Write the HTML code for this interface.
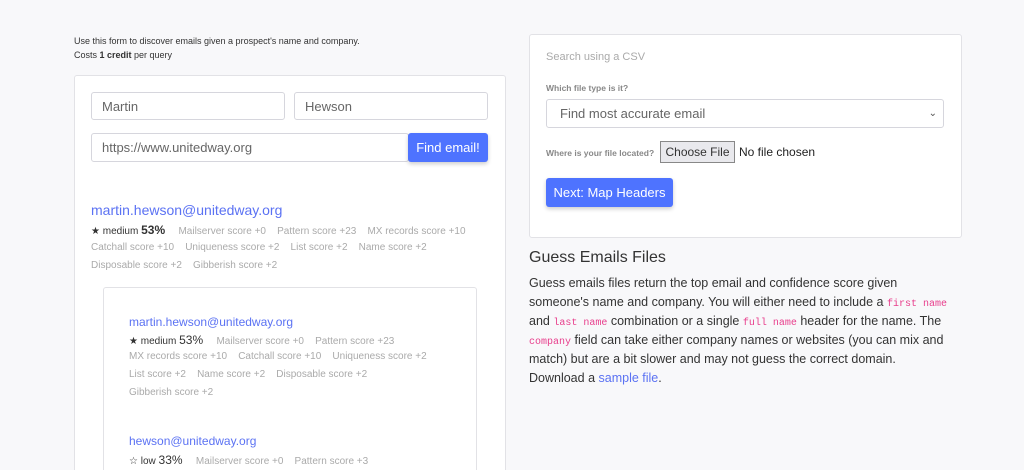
<!DOCTYPE html>
<html><head><style>
html,body{margin:0;width:1024px;height:470px;overflow:hidden}
body{background:#f8f8fa;font-family:"Liberation Sans",sans-serif;position:relative;color:#333}
.a{position:absolute;white-space:nowrap;line-height:14px}
.card{position:absolute;background:#fff;border:1px solid #e2e2e6;border-radius:3px}
.inp{position:absolute;background:#fff;border:1px solid #d6d6dd;border-radius:3px;font-size:13px;color:#666;box-sizing:border-box;padding-left:10px;display:flex;align-items:center}
.btn{position:absolute;background:#4e73ff;color:#fff;border-radius:3px;display:flex;align-items:center;justify-content:center;font-size:13px;box-shadow:0 2px 4px rgba(0,0,0,.2)}
.em{color:#5b72f3}
.g{color:#aaa;font-size:10px}
.s{font-size:10px;color:#333}
code{font-family:"Liberation Mono",monospace;color:#e83e8c;font-size:10px;line-height:10px}
</style></head><body>
<div class="a" style="left:74px;top:34px;font-size:9px;color:#333">Use this form to discover emails given a prospect's name and company.</div>
<div class="a" style="left:74px;top:48px;font-size:9px;color:#333">Costs <b>1 credit</b> per query</div>

<div class="card" style="left:74px;top:75px;width:430px;height:394px;border-bottom:none;border-radius:3px 3px 0 0"></div>
<div class="inp" style="left:91px;top:92px;width:194px;height:28px">Martin</div>
<div class="inp" style="left:294px;top:92px;width:194px;height:28px">Hewson</div>
<div class="inp" style="left:91px;top:133px;width:318px;height:29px">https://www.unitedway.org</div>
<div class="btn" style="left:408px;top:133px;width:80px;height:29px">Find email!</div>

<div class="a em" style="left:91px;top:203px;font-size:14px">martin.hewson@unitedway.org</div>
<div class="a" style="left:91px;top:223px"><span class="s">★ medium <b style="font-size:12px">53%</b></span>&nbsp;&nbsp; <span class="g">Mailserver score +0 &nbsp;&nbsp; Pattern score +23 &nbsp;&nbsp; MX records score +10</span></div>
<div class="a g" style="left:91px;top:241px">Catchall score +10 &nbsp;&nbsp; Uniqueness score +2 &nbsp;&nbsp; List score +2 &nbsp;&nbsp; Name score +2</div>
<div class="a g" style="left:91px;top:259px">Disposable score +2 &nbsp;&nbsp; Gibberish score +2</div>

<div class="card" style="left:103px;top:287px;width:372px;height:182px;border-bottom:none;border-radius:3px 3px 0 0"></div>
<div class="a em" style="left:129px;top:315px;font-size:12px">martin.hewson@unitedway.org</div>
<div class="a" style="left:129px;top:333px"><span class="s">★ medium <span style="font-size:12px">53%</span></span>&nbsp;&nbsp; <span class="g">Mailserver score +0 &nbsp;&nbsp; Pattern score +23</span></div>
<div class="a g" style="left:129px;top:350px">MX records score +10 &nbsp;&nbsp; Catchall score +10 &nbsp;&nbsp; Uniqueness score +2</div>
<div class="a g" style="left:129px;top:368px">List score +2 &nbsp;&nbsp; Name score +2 &nbsp;&nbsp; Disposable score +2</div>
<div class="a g" style="left:129px;top:386px">Gibberish score +2</div>
<div class="a em" style="left:129px;top:434px;font-size:12px">hewson@unitedway.org</div>
<div class="a" style="left:129px;top:453px"><span class="s">☆ low <span style="font-size:12px">33%</span></span>&nbsp;&nbsp; <span class="g">Mailserver score +0 &nbsp;&nbsp; Pattern score +3</span></div>

<div class="card" style="left:529px;top:34px;width:431px;height:202px"></div>
<div class="a" style="left:546px;top:50px;font-size:11px;color:#aaa">Search using a CSV</div>
<div class="a" style="left:546px;top:81px;font-size:8.5px;color:#888;font-weight:bold">Which file type is it?</div>
<div class="inp" style="left:546px;top:99px;width:398px;height:29px;padding-left:13px">Find most accurate email<span style="position:absolute;right:6px;font-size:10px;color:#555">⌄</span></div>
<div class="a" style="left:546px;top:146px;font-size:8.5px;color:#888;font-weight:bold">Where is your file located?</div>
<div class="a" style="left:660px;top:141px;width:75px;height:22px;box-sizing:border-box;background:#e9e9ed;border:1px solid #888;font-size:12px;color:#333;text-align:center;line-height:20px">Choose File</div>
<div class="a" style="left:739px;top:145px;font-size:12px;color:#222">No file chosen</div>
<div class="btn" style="left:546px;top:178px;width:127px;height:29px">Next: Map Headers</div>

<div class="a" style="left:529px;top:249px;font-size:16px;line-height:18px;color:#333">Guess Emails Files</div>
<div class="a" style="left:529px;top:274px;font-size:12.5px;line-height:19px;color:#333;white-space:normal;width:422px">Guess emails files return the top email and confidence score given someone's name and company. You will either need to include a <code>first name</code> and <code>last name</code> combination or a single <code>full name</code> header for the name. The <code>company</code> field can take either company names or websites (you can mix and match) but are a bit slower and may not guess the correct domain. Download a <span class="em">sample file</span>.</div>
</body></html>
